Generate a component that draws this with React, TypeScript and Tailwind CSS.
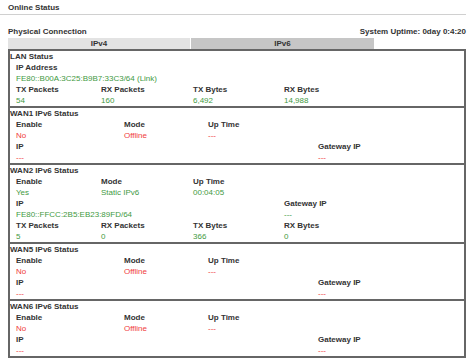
import React from 'react';

type Cell = { t: string; c?: 'h' | 'g' | 'r' };

const LAN_COLS = 'grid-cols-[85px_92px_91px_1fr]';
const OFF_COLS = 'grid-cols-[108px_84px_110px_1fr]';

const tone = (c?: string) =>
  c === 'h' ? 'font-bold text-[#333]' : c === 'g' ? 'text-[#3f9a3f]' : c === 'r' ? 'text-[#f03c3c]' : '';

const Row: React.FC<{ cols: string; cells: Cell[] }> = ({ cols, cells }) => (
  <div className={`grid ${cols} h-[11px] items-center pl-[6px]`}>
    {cells.map((cell, i) => (
      <span key={i} className={tone(cell.c)}>
        {cell.t}
      </span>
    ))}
  </div>
);

const Section: React.FC<{ title: string; first?: boolean; children: React.ReactNode }> = ({ title, first, children }) => (
  <div className={first ? '' : 'border-t-2 border-[#666]'}>
    <div className="h-[11px] flex items-center font-bold text-[#333]">{title}</div>
    {children}
  </div>
);

const h = (t: string): Cell => ({ t, c: 'h' });
const g = (t: string): Cell => ({ t, c: 'g' });
const r = (t: string): Cell => ({ t, c: 'r' });
const e: Cell = { t: '' };

const Offline: React.FC<{ title: string }> = ({ title }) => (
  <Section title={title}>
    <Row cols={OFF_COLS} cells={[h('Enable'), h('Mode'), h('Up Time')]} />
    <Row cols={OFF_COLS} cells={[r('No'), r('Offline'), r('---')]} />
    <Row cols={OFF_COLS} cells={[h('IP'), e, e, h('Gateway IP')]} />
    <Row cols={OFF_COLS} cells={[r('---'), e, e, r('---')]} />
  </Section>
);

export default function App() {
  return (
    <div className="w-[474px] h-[364px] bg-white text-[8px] leading-[11px] text-[#333] font-['Liberation_Sans',Arial,sans-serif]">
      <div className="w-[466px] h-[15px] pl-2 flex items-center font-bold border-b border-[#d0d0d0]">Online Status</div>

      <div className="h-[23px] flex items-end justify-between pl-2 pr-2 pb-[1px] font-bold">
        <span>Physical Connection</span>
        <span>System Uptime: 0day 0:4:20</span>
      </div>

      <div className="ml-2 flex h-[11px] font-bold">
        <div className="w-[182px] bg-[#e3e3e3] flex items-center justify-center">IPv4</div>
        <div className="w-[184px] bg-[#c6c6c6] border-l border-white flex items-center justify-center">IPv6</div>
      </div>

      <div className="ml-2 w-[458px] border-2 border-[#666]">
        <Section title="LAN Status" first>
          <Row cols={LAN_COLS} cells={[h('IP Address')]} />
          <Row cols="grid-cols-[1fr]" cells={[g('FE80::B00A:3C25:B9B7:33C3/64 (Link)')]} />
          <Row cols={LAN_COLS} cells={[h('TX Packets'), h('RX Packets'), h('TX Bytes'), h('RX Bytes')]} />
          <Row cols={LAN_COLS} cells={[g('54'), g('160'), g('6,492'), g('14,988')]} />
        </Section>

        <Offline title="WAN1 IPv6 Status" />

        <Section title="WAN2 IPv6 Status">
          <Row cols={LAN_COLS} cells={[h('Enable'), h('Mode'), h('Up Time')]} />
          <Row cols={LAN_COLS} cells={[g('Yes'), g('Static IPv6'), g('00:04:05')]} />
          <Row cols={LAN_COLS} cells={[h('IP'), e, e, h('Gateway IP')]} />
          <Row cols={LAN_COLS} cells={[g('FE80::FFCC:2B5:EB23:89FD/64'), e, e, g('---')]} />
          <Row cols={LAN_COLS} cells={[h('TX Packets'), h('RX Packets'), h('TX Bytes'), h('RX Bytes')]} />
          <Row cols={LAN_COLS} cells={[g('5'), g('0'), g('366'), g('0')]} />
        </Section>

        <Offline title="WAN5 IPv6 Status" />
        <Offline title="WAN6 IPv6 Status" />
      </div>
    </div>
  );
}
